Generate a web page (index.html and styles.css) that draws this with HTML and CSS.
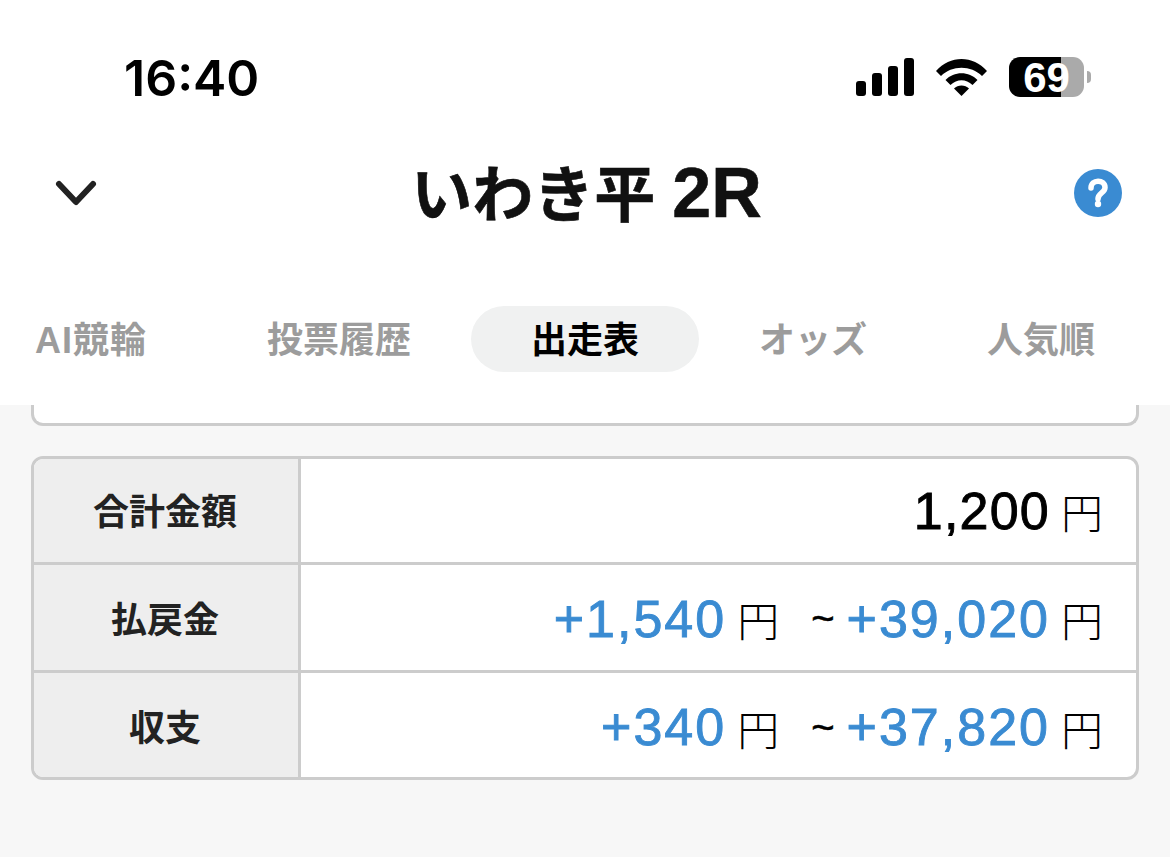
FILE: index.html
```html
<!doctype html>
<html lang="ja">
<head>
    <meta charset="utf-8"/>
    <title>いわき平 2R</title>
    <link rel="stylesheet" href="styles.css">
</head>

<body>
    <div class="top">
        <div class="status">
            <span class="time">16:40</span>
            <div class="status-icons">
                <svg class="signal" width="58" height="38" viewBox="0 0 58 38">
                    <rect x="0" y="23" width="10" height="15" rx="3"/>
                    <rect x="16" y="15" width="10" height="23" rx="3"/>
                    <rect x="32" y="8" width="10" height="30" rx="3"/>
                    <rect x="48" y="0" width="10" height="38" rx="3"/>
                </svg>
                <svg class="wifi" width="51" height="38" viewBox="0 0 51 38">
                    <path d="M0 13 C14 -3 37 -3 51 13 L46 18 C35 7 16 7 5 18 Z"/>
                    <path d="M9.500 22 C18 13 33 13 41.500 22 L36.500 27 C30 20.500 21 20.500 14.500 27 Z"/>
                    <path d="M25.500 38 L18 30.500 C22 26.500 29 26.500 33 30.500 Z"/>
                </svg>
                <div class="battery">69</div>
            </div>
        </div>

        <div class="head">
            <svg class="back" width="44" height="30" viewBox="0 0 44 30">
                <path d="M4 4 L21 22 L38 4"/>
            </svg>
            <h1>いわき平 <span>2R</span></h1>
            <svg class="help" width="48" height="48" viewBox="0 0 48 48">
                <circle cx="24" cy="24" r="24"/>
                <path class="q" d="M17 19 C17 10 31 10 31 18.500 C31 24 24 24 24 30"/>
                <circle class="dot" cx="24" cy="35" r="3.200"/>
            </svg>
        </div>

        <ul class="tabs">
            <li>AI競輪</li>
            <li>投票履歴</li>
            <li class="current">出走表</li>
            <li>オッズ</li>
            <li>人気順</li>
        </ul>
    </div>

    <div class="main">
        <div class="prev-card"></div>

        <div class="summary">
            <div class="row">
                <div class="label">合計金額</div>
                <div class="value"><b class="black">1,200</b><i>円</i></div>
            </div>
            <div class="row">
                <div class="label">払戻金</div>
                <div class="value"><b>+1,540</b><i>円</i><s>~</s><b>+39,020</b><i>円</i></div>
            </div>
            <div class="row">
                <div class="label">収支</div>
                <div class="value"><b>+340</b><i>円</i><s>~</s><b>+37,820</b><i>円</i></div>
            </div>
        </div>
    </div>
</body>
</html>
```

FILE: styles.css
```css
* {
    padding: 0;
    margin: 0;
    list-style: none;
    box-sizing: border-box;
}

html, body {
    height: 100%;
}

body {
    width: 1170px;
    height: 857px;
    overflow: hidden;
    background: #f7f7f7;
    color: #000;
    font-family: "Liberation Sans", "Noto Sans CJK JP", sans-serif;
}

.top {
    height: 405px;
    background: #fff;
    overflow: hidden;
}

.status {
    height: 130px;
    padding: 50px 86px 0 124px;
    display: flex;
    justify-content: space-between;
    align-items: flex-start;
}

.time {
    font-family: Inter, sans-serif;
    font-size: 50px;
    font-weight: 600;
    line-height: 56px;
}

.status-icons {
    display: flex;
    align-items: center;
    gap: 22px;
    padding-top: 7px;
}

.battery {
    width: 75px;
    height: 40px;
    border-radius: 11px;
    background: linear-gradient(to right, #000 69%, #aaa 69%);
    color: #fff;
    font-size: 42px;
    font-weight: bold;
    line-height: 41px;
    text-align: center;
    position: relative;
}

.battery:after {
    content: "";
    position: absolute;
    left: 78px;
    top: 14px;
    width: 4px;
    height: 12px;
    border-radius: 0 4px 4px 0;
    background: #aaa;
}

.head {
    height: 130px;
    padding: 0 48px 0 55px;
    display: flex;
    justify-content: space-between;
    align-items: center;
}

.head h1 {
    padding-bottom: 10px;
    font-size: 61px;
    font-weight: bold;
    color: #111;
    -webkit-text-stroke: 0.6px currentColor;
}

.head h1 span {
    font-size: 70px;
    line-height: 60px;
}

.back path {
    fill: none;
    stroke: #222;
    stroke-width: 6;
    stroke-linecap: round;
    stroke-linejoin: round;
}

.help {
    margin-bottom: 4px;
}

.help circle {
    fill: #3a8bd2;
}

.help .q {
    fill: none;
    stroke: #fff;
    stroke-width: 5.500;
    stroke-linecap: round;
}

.help .dot {
    fill: #fff;
}

.tabs {
    margin: 46px 0 0 -25px;
    display: flex;
    width: 1300px;
}

.tabs li {
    height: 66px;
    padding: 0 60px;
    border-radius: 33px;
    font-size: 36px;
    font-weight: bold;
    line-height: 70px;
    color: #9c9c9c;
    white-space: nowrap;
}

.tabs li:first-child {
    letter-spacing: 1px;
}

.tabs li.current {
    background: #f0f1f1;
    color: #000;
}

.main {
    padding: 0 31px;
}

.prev-card {
    height: 21px;
    background: #fff;
    border: 3px solid #ccc;
    border-top: 0;
    border-radius: 0 0 12px 12px;
}

.summary {
    margin-top: 30px;
    background: #fff;
    border: 3px solid #ccc;
    border-radius: 12px;
    overflow: hidden;
}

.row {
    height: 108px;
    display: flex;
    border-bottom: 3px solid #ccc;
}

.row:first-child {
    height: 106px;
}

.row:last-child {
    height: 104px;
    border-bottom: 0;
}

.row:nth-child(2) > div {
    padding-top: 2px;
}

.row:nth-child(3) > div {
    padding-top: 4px;
}

.label {
    width: 267px;
    flex: none;
    display: flex;
    align-items: center;
    justify-content: center;
    padding-right: 2px;
    padding-bottom: 4px;
    background: #eee;
    border-right: 3px solid #ccc;
    color: #222;
    font-size: 36px;
    font-weight: bold;
}

.value {
    flex: 1;
    display: flex;
    align-items: center;
    justify-content: flex-end;
    padding-right: 33px;
}

.value b {
    font-size: 52px;
    font-weight: normal;
    letter-spacing: 2px;
    -webkit-text-stroke: 0.9px currentColor;
    color: #3a8bd2;
}

.value b.black {
    letter-spacing: 1.200px;
    color: #000;
}

.value i {
    margin-left: 11px;
    font-style: normal;
    font-size: 42px;
    font-weight: 300;
}

.value s {
    margin: 0 12px 0 32px;
    text-decoration: none;
    font-size: 40px;
    -webkit-text-stroke: 0.5px currentColor;
}
```
